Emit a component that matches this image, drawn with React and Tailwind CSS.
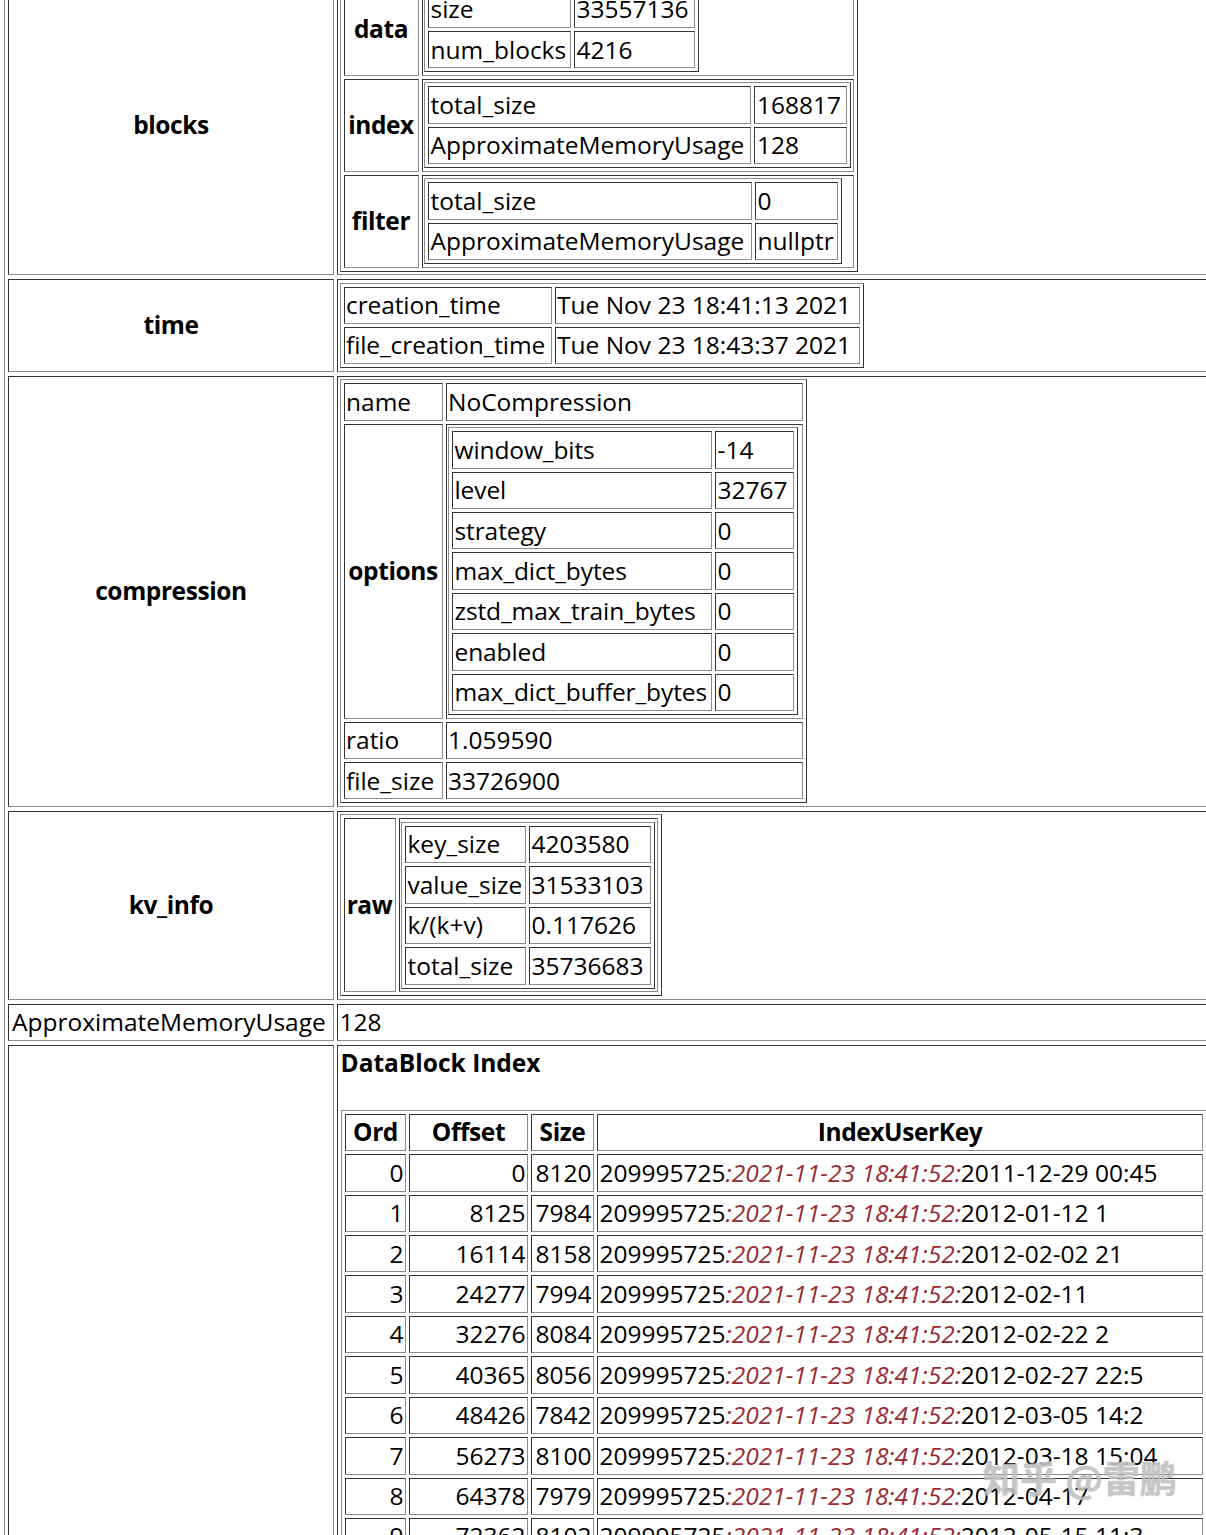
import React from "react";

const T =
  "border-separate border-spacing-[3px] border border-t-[#8c8c8c] border-l-[#8c8c8c] border-b-[#333333] border-r-[#333333]";
const TO =
  "border-separate border-spacing-x-[3px] border-spacing-y-[4px] border border-t-[#8c8c8c] border-l-[#8c8c8c] border-b-[#333333] border-r-[#333333]";
const C =
  "border border-t-[#333333] border-l-[#333333] border-b-[#8c8c8c] border-r-[#8c8c8c] px-[1.5px] py-[2.5px] align-middle text-left font-normal whitespace-nowrap";
const CT =
  "border border-t-[#333333] border-l-[#333333] border-b-[#8c8c8c] border-r-[#8c8c8c] px-[1.5px] py-[2.5px] align-middle text-left font-normal whitespace-nowrap tracking-[-0.1px]";
const H =
  "border border-t-[#333333] border-l-[#333333] border-b-[#8c8c8c] border-r-[#8c8c8c] px-[1.5px] py-[2.5px] align-middle text-center font-bold whitespace-nowrap tracking-[-0.4px]";
const R =
  "border border-t-[#333333] border-l-[#333333] border-b-[#8c8c8c] border-r-[#8c8c8c] px-[1.5px] py-[2.5px] align-middle text-right font-normal whitespace-nowrap";

function KV({ rows, w1, w2, tight }) {
  return (
    <table className={T}>
      <tbody>
        {rows.map(([k, v], i) => (
          <tr key={i}>
            <td className={`${tight ? CT : C} ${w1}`}>{k}</td>
            <td className={`${C} ${w2}`}>{v}</td>
          </tr>
        ))}
      </tbody>
    </table>
  );
}

const indexRows = [
  ["0", "0", "8120", "2011-12-29 00:45"],
  ["1", "8125", "7984", "2012-01-12 1"],
  ["2", "16114", "8158", "2012-02-02 21"],
  ["3", "24277", "7994", "2012-02-11"],
  ["4", "32276", "8084", "2012-02-22 2"],
  ["5", "40365", "8056", "2012-02-27 22:5"],
  ["6", "48426", "7842", "2012-03-05 14:2"],
  ["7", "56273", "8100", "2012-03-18 15:04"],
  ["8", "64378", "7979", "2012-04-17"],
  ["9", "72362", "8102", "2012-05-15 11:3"],
  ["10", "80469", "8040", "2012-06-01 09:1"],
];

export default function App() {
  return (
    <div className="relative w-[1206px] h-[1535px] overflow-hidden bg-white text-black [font-family:'Open_Sans','Noto_Sans',sans-serif] text-[24.5px] leading-[30.4px]">
      <table className={`${TO} w-[1211px] ml-[4px] -mt-[29.4px]`}>
        <tbody>
          <tr>
            <th className={`${H} w-[326px]`}>blocks</th>
            <td className={`${C} w-[874px]`}>
              <table className={T}>
                <tbody>
                  <tr>
                    <th className={`${H} w-[75px]`}>data</th>
                    <td className={`${C} w-[432px]`}>
                      <KV
                        w1="w-[143px]"
                        w2="w-[121px]"
                        rows={[
                          ["size", "33557136"],
                          ["num_blocks", "4216"],
                        ]}
                      />
                    </td>
                  </tr>
                  <tr>
                    <th className={`${H} w-[75px]`}>index</th>
                    <td className={`${C} w-[432px]`}>
                      <KV
                        w1="w-[324px]"
                        w2="w-[93px]"
                        rows={[
                          ["total_size", "168817"],
                          ["ApproximateMemoryUsage", "128"],
                        ]}
                      />
                    </td>
                  </tr>
                  <tr>
                    <th className={`${H} w-[75px]`}>filter</th>
                    <td className={`${C} w-[432px]`}>
                      <KV
                        w1="w-[324px]"
                        w2="w-[83px]"
                        rows={[
                          ["total_size", "0"],
                          ["ApproximateMemoryUsage", "nullptr"],
                        ]}
                      />
                    </td>
                  </tr>
                </tbody>
              </table>
            </td>
          </tr>
          <tr>
            <th className={H}>time</th>
            <td className={C}>
              <KV
                tight
                w1="w-[208px]"
                w2="w-[305px]"
                rows={[
                  ["creation_time", "Tue Nov 23 18:41:13 2021"],
                  ["file_creation_time", "Tue Nov 23 18:43:37 2021"],
                ]}
              />
            </td>
          </tr>
          <tr>
            <th className={H}>compression</th>
            <td className={C}>
              <table className={T}>
                <tbody>
                  <tr>
                    <td className={`${C} w-[99px]`}>name</td>
                    <td className={`${C} w-[357px]`}>NoCompression</td>
                  </tr>
                  <tr>
                    <th className={`${H} w-[99px]`}>options</th>
                    <td className={`${C} w-[357px]`}>
                      <KV
                        tight
                        w1="w-[260px]"
                        w2="w-[79px]"
                        rows={[
                          ["window_bits", "-14"],
                          ["level", "32767"],
                          ["strategy", "0"],
                          ["max_dict_bytes", "0"],
                          ["zstd_max_train_bytes", "0"],
                          ["enabled", "0"],
                          ["max_dict_buffer_bytes", "0"],
                        ]}
                      />
                    </td>
                  </tr>
                  <tr>
                    <td className={C}>ratio</td>
                    <td className={C}>1.059590</td>
                  </tr>
                  <tr>
                    <td className={C}>file_size</td>
                    <td className={C}>33726900</td>
                  </tr>
                </tbody>
              </table>
            </td>
          </tr>
          <tr>
            <th className={H}>kv_info</th>
            <td className={C}>
              <table className={T}>
                <tbody>
                  <tr>
                    <th className={`${H} w-[52px]`}>raw</th>
                    <td className={`${C} w-[259px]`}>
                      <KV
                        w1="w-[121px]"
                        w2="w-[122px]"
                        rows={[
                          ["key_size", "4203580"],
                          ["value_size", "31533103"],
                          ["k/(k+v)", "0.117626"],
                          ["total_size", "35736683"],
                        ]}
                      />
                    </td>
                  </tr>
                </tbody>
              </table>
            </td>
          </tr>
          <tr>
            <td className={`${C} pl-[3px]`}>ApproximateMemoryUsage</td>
            <td className={C}>128</td>
          </tr>
          <tr>
            <td className={C}></td>
            <td className={`${C} align-top`}>
              <div className="font-bold mb-[31px] pl-px">DataBlock Index</div>
              <table className={`${T} ml-[1.5px]`}>
                <thead>
                  <tr>
                    <th className={`${H} w-[61px]`}>Ord</th>
                    <th className={`${H} w-[119px]`}>Offset</th>
                    <th className={`${H} w-[63px]`}>Size</th>
                    <th className={`${H} w-[606px]`}>IndexUserKey</th>
                  </tr>
                </thead>
                <tbody>
                  {indexRows.map(([o, off, sz, key]) => (
                    <tr key={o}>
                      <td className={R}>{o}</td>
                      <td className={R}>{off}</td>
                      <td className={R}>{sz}</td>
                      <td className={C}>
                        209995725
                        <i className="italic text-[#982b30]">:2021-11-23 18:41:52:</i>
                        {key}
                      </td>
                    </tr>
                  ))}
                </tbody>
              </table>
            </td>
          </tr>
        </tbody>
      </table>
      <div className="absolute left-[983px] top-[1454px] whitespace-nowrap text-[37px] leading-[46px] font-bold text-[#d2d2d2]/80 [font-family:'Noto_Sans_CJK_SC',sans-serif] [text-shadow:0_0_1px_rgba(80,80,80,0.55)]">
        知乎 @雷鹏
      </div>
    </div>
  );
}
